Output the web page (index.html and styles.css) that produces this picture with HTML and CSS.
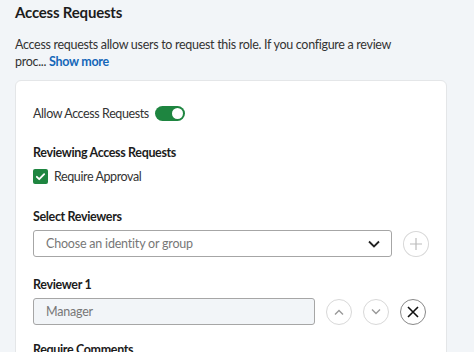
FILE: index.html
```html
<!DOCTYPE html>
<html>
<head>
<meta charset="utf-8">
<link rel="stylesheet" href="styles.css">
</head>
<body>
<div class="page">
  <h1 class="title">Access Requests</h1>
  <p class="desc">Access requests allow users to request this role. If you configure a review proc... <a class="more" href="#">Show more</a></p>
  <div class="card">
    <div class="row-toggle">
      <span class="label">Allow Access Requests</span>
      <span class="toggle"><span class="knob"></span></span>
    </div>
    <div class="section-title sec-review">Reviewing Access Requests</div>
    <div class="check-row">
      <span class="checkbox"><svg width="11" height="11" viewBox="0 0 12 12"><path d="M2 6.3l2.6 2.6L10 3.4" fill="none" stroke="#fff" stroke-width="2" stroke-linecap="round" stroke-linejoin="round"/></svg></span>
      <span class="label">Require Approval</span>
    </div>
    <div class="section-title sec-select">Select Reviewers</div>
    <div class="field-row">
      <div class="select">
        <span class="placeholder">Choose an identity or group</span>
        <svg class="chev" width="14" height="10" viewBox="0 0 14 10"><path d="M2 2.5l5 5 5-5" fill="none" stroke="#222" stroke-width="1.8"/></svg>
      </div>
      <span class="circle light"><svg width="14" height="14" viewBox="0 0 14 14"><path d="M7 1v12M1 7h12" stroke="#bbb" stroke-width="1.2"/></svg></span>
    </div>
    <div class="section-title sec-rev1">Reviewer 1</div>
    <div class="field-row">
      <div class="input disabled"><span class="placeholder">Manager</span></div>
      <span class="circle light"><svg width="12" height="8" viewBox="0 0 12 8"><path d="M2 6.5l4-4 4 4" fill="none" stroke="#999" stroke-width="1.4"/></svg></span>
      <span class="circle light"><svg width="12" height="8" viewBox="0 0 12 8"><path d="M2 1.5l4 4 4-4" fill="none" stroke="#999" stroke-width="1.4"/></svg></span>
      <span class="circle dark"><svg width="14" height="14" viewBox="0 0 14 14"><path d="M2 2l10 10M12 2L2 12" stroke="#111" stroke-width="1.6"/></svg></span>
    </div>
    <div class="section-title sec-comments">Require Comments</div>
  </div>
</div>
</body>
</html>
```
FILE: styles.css
```css
html, body {
  margin: 0;
  padding: 0;
  background: #f2f5f8;
  overflow: hidden;
}
body {
  font-family: "Source Sans Pro", Lato, "Liberation Sans", sans-serif;
  color: #222;
  font-size: 12px;
  letter-spacing: -0.3px;
}
.page {
  padding: 0 27px 0 15px;
}
.title {
  margin: 0;
  padding-top: 2px;
  font-size: 15px;
  letter-spacing: -0.2px;
  font-weight: 700;
  line-height: 20px;
  color: #1c1c1c;
}
.desc {
  margin: 14px 0 0;
  line-height: 17px;
  color: #333;
  font-size: 12.5px;
  width: 380px;
}
.more {
  color: #1567b8;
  font-weight: 700;
  text-decoration: none;
}
.card {
  margin-top: 10px;
  background: #fff;
  border: 1px solid #e4e6e8;
  border-radius: 6px;
  padding: 22px 17px 0 17px;
  height: 300px;
}
.row-toggle {
  display: flex;
  align-items: center;
  gap: 6px;
  height: 20px;
}
.label {
  color: #333;
  font-size: 12.5px;
  letter-spacing: -0.4px;
}
.toggle {
  width: 30px;
  height: 15px;
  border-radius: 8px;
  background: #1e8540;
  position: relative;
  display: inline-block;
}
.knob {
  position: absolute;
  right: 2px;
  top: 2px;
  width: 11px;
  height: 11px;
  border-radius: 50%;
  background: #fff;
}
.section-title {
  font-weight: 700;
  color: #1c1c1c;
  line-height: 18px;
  font-size: 12.5px;
  letter-spacing: -0.35px;
}
.sec-review { margin-top: 21px; }
.check-row {
  display: flex;
  align-items: center;
  gap: 6px;
  margin-top: 6px;
  height: 16px;
}
.checkbox {
  width: 15px;
  height: 15px;
  background: #1e8540;
  border-radius: 2px;
  display: flex;
  align-items: center;
  justify-content: center;
}
.sec-select { margin-top: 24px; }
.sec-rev1 { margin-top: 19px; }
.sec-comments { margin-top: 16px; }
.field-row {
  display: flex;
  align-items: center;
  margin-top: 4px;
  gap: 11px;
}
.select, .input {
  height: 25px;
  border: 1px solid #a6a6a6;
  border-radius: 3px;
  display: flex;
  align-items: center;
  padding: 0 10px 0 12px;
  box-sizing: content-box;
}
.select {
  width: 336px;
  justify-content: space-between;
}
.input {
  width: 258px;
  background: #f2f5f8;
}
.placeholder {
  color: #777;
  font-size: 12.5px;
  letter-spacing: -0.2px;
}
.circle {
  width: 26px;
  height: 26px;
  border-radius: 50%;
  display: flex;
  align-items: center;
  justify-content: center;
  box-sizing: border-box;
}
.circle.light { border: 1px solid #d8d8d8; }
.circle.dark { border: 1px solid #888; }
```
